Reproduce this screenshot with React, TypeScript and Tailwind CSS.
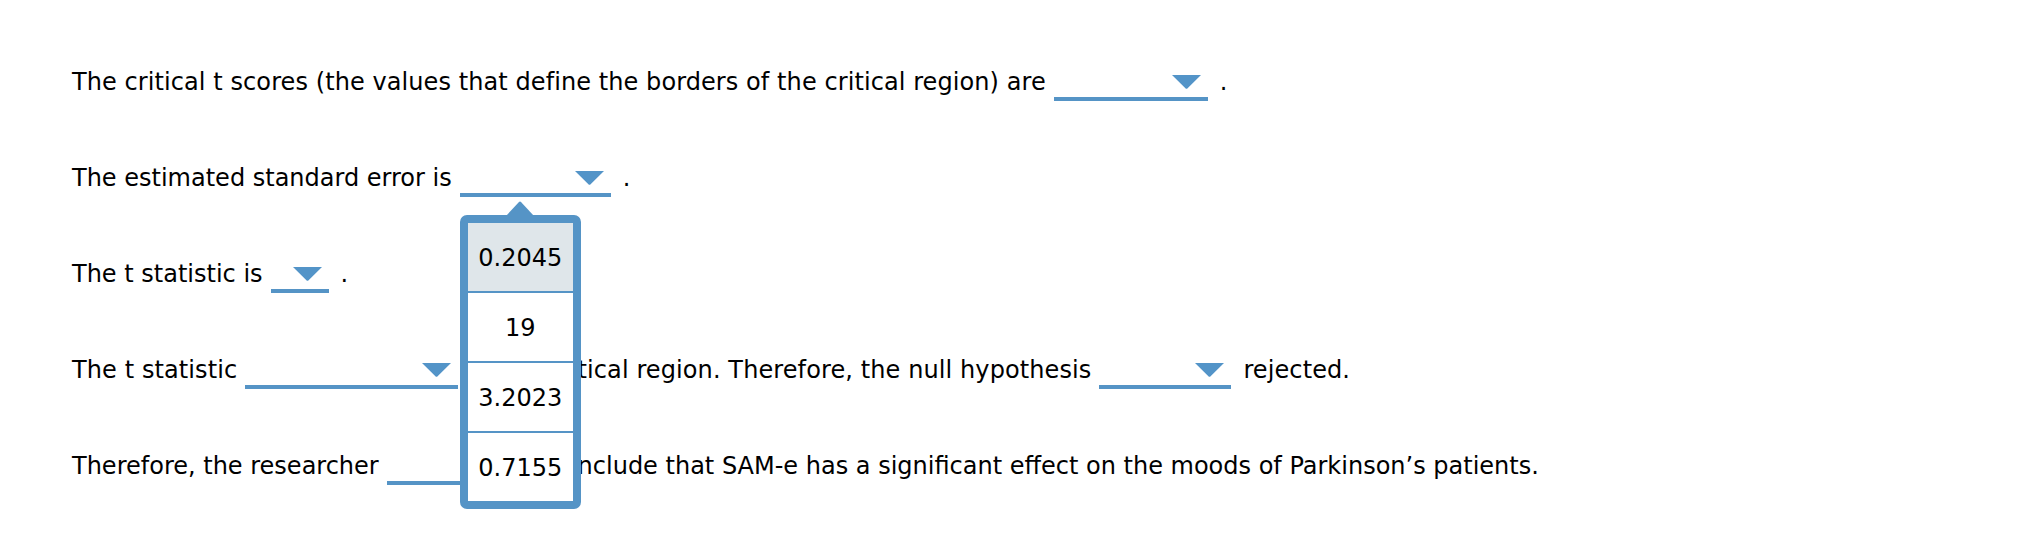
import type { ReactNode } from 'react';

const OPTIONS = ['0.2045', '19', '3.2023', '0.7155'];

// Down-pointing caret drawn inside every blank
const DropArrow = () => (
  <svg
    width="29"
    height="14"
    viewBox="0 0 29 14"
    className="absolute right-[7px] bottom-[8px]"
  >
    <path d="M0 0H29L15.6 13.2Q14.5 14.3 13.4 13.2Z" fill="#5394c8" />
  </svg>
);

const Blank = ({ width, children }: { width: string; children?: ReactNode }) => (
  <span
    className={`relative inline-block h-[30px] ${width} ml-[8px] mr-[12px] border-b-4 border-[#5594c6] align-[-11px]`}
  >
    <DropArrow />
    {children}
  </span>
);

// Open list hanging under the "standard error" blank
const OptionList = () => (
  <div className="absolute left-0 top-[calc(100%+8px)] z-10 w-[121px] leading-normal tracking-normal">
    <svg width="28" height="15" viewBox="0 0 28 15" className="mx-auto -mb-px block">
      <path d="M0 15L12.8 1.2Q14 0 15.2 1.2L28 15Z" fill="#5594c6" />
    </svg>
    <ul className="flex flex-col gap-[2px] rounded-[7px] border-8 border-[#5594c6] bg-[#5594c6]">
      {OPTIONS.map((option, i) => (
        <li
          key={option}
          className={`flex h-[68px] items-center justify-center pt-[1px] ${
            i === 0 ? 'bg-[#dfe6ea]' : 'bg-white'
          }`}
        >
          {option}
        </li>
      ))}
    </ul>
  </div>
);

export default function App() {
  return (
    <div className="h-[538px] w-full bg-white pl-[72px] pt-[34px] font-['DejaVu_Sans',Verdana,sans-serif] text-[24px] text-black">
      <p className="h-[96px] whitespace-nowrap leading-[96px] tracking-[0.08px]">
        <span>The critical t scores (the values that define the borders of the critical region) are</span>
        <Blank width="w-[154px]" />
        <span>.</span>
      </p>

      <p className="h-[96px] whitespace-nowrap leading-[96px]">
        <span>The estimated standard error is</span>
        <Blank width="w-[151px]">
          <OptionList />
        </Blank>
        <span>.</span>
      </p>

      <p className="h-[96px] whitespace-nowrap leading-[96px]">
        <span>The t statistic is</span>
        <Blank width="w-[58px]" />
        <span>.</span>
      </p>

      <p className="h-[96px] whitespace-nowrap leading-[96px] tracking-[0.1px]">
        <span>The t statistic</span>
        <Blank width="w-[213px]" />
        <span>in the critical region. Therefore, the null hypothesis</span>
        <Blank width="w-[132px]" />
        <span>rejected.</span>
      </p>

      <p className="h-[96px] whitespace-nowrap leading-[96px]">
        <span>Therefore, the researcher</span>
        <Blank width="w-[151px]" />
        <span>conclude that SAM-e has a significant effect on the moods of Parkinson’s patients.</span>
      </p>
    </div>
  );
}
